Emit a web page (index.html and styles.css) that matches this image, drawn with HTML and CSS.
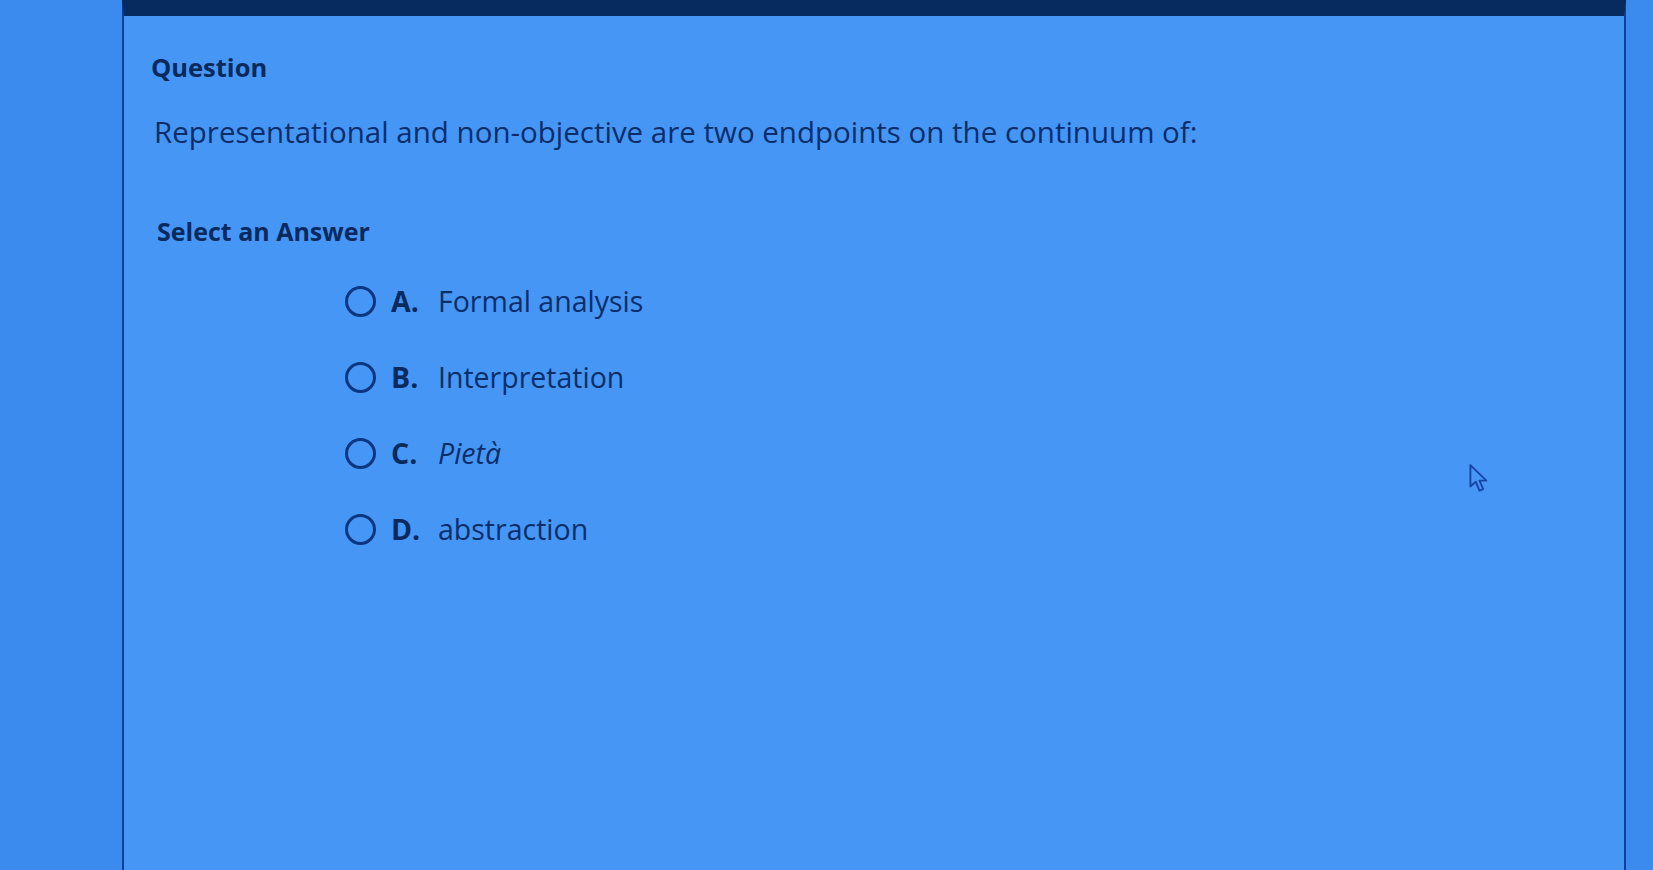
FILE: index.html
```html
<!DOCTYPE html>
<html lang="en">
<head>
<meta charset="utf-8">
<title>Question</title>
<link rel="stylesheet" href="styles.css">
</head>
<body>
<div class="screen">
  <div class="panel">
    <div class="content">
      <h2 class="label">Question</h2>
      <p class="prompt">Representational and non-objective are two endpoints on the continuum of:</p>
      <h3 class="select">Select an Answer</h3>
      <ul class="options">
        <li class="option"><span class="radio"></span><span class="letter">A.</span><span class="text">Formal analysis</span></li>
        <li class="option"><span class="radio"></span><span class="letter">B.</span><span class="text">Interpretation</span></li>
        <li class="option"><span class="radio"></span><span class="letter">C.</span><span class="text italic">Pietà</span></li>
        <li class="option"><span class="radio"></span><span class="letter">D.</span><span class="text">abstraction</span></li>
      </ul>
    </div>
    <svg class="cursor" width="24" height="32" viewBox="0 0 22 30" aria-hidden="true">
      <path d="M2 2 L2 22 L7 17.5 L10.5 26 L14 24.5 L10.5 16.5 L17 16.5 Z" fill="none" stroke="#1746a8" stroke-width="1.8" stroke-linejoin="round"/>
    </svg>
  </div>
</div>
</body>
</html>
```
FILE: styles.css
```css
html, body {
  margin: 0;
  padding: 0;
  height: 100%;
  overflow: hidden;
}
body {
  background: #3b8bee;
  font-family: "Open Sans", "Noto Sans", sans-serif;
  color: #0b2d66;
}
.screen {
  height: 870px;
  padding-left: 122px;
}
.panel {
  position: relative;
  width: 1500px;
  height: 854px;
  background: #4696f6;
  border-top: 16px solid #072b5e;
  border-left: 2px solid #0e3f9c;
  border-right: 2px solid #0e3f9c;
}
.content {
  padding: 33px 0 0 27px;
}
.label {
  margin: 0;
  font-size: 25.5px;
  font-weight: 700;
  line-height: 36px;
  color: #0a2a5e;
}
.prompt {
  margin: 27px 0 0 3px;
  font-size: 29.5px;
  line-height: 40px;
  color: #0b2e6a;
}
.select {
  margin: 61px 0 0 6px;
  font-size: 25px;
  font-weight: 700;
  line-height: 36px;
  color: #0a2a5e;
}
.options {
  list-style: none;
  margin: 32px 0 0 194px;
  padding: 0;
  display: flex;
  flex-direction: column;
  gap: 36px;
}
.option {
  display: flex;
  align-items: center;
  height: 40px;
  font-size: 28.5px;
  color: #0b2e6a;
}
.radio {
  width: 25px;
  height: 25px;
  border: 3px solid #0d3680;
  border-radius: 50%;
  flex: none;
}
.letter {
  margin-left: 15px;
  width: 47px;
  font-weight: 700;
  color: #0a2a5e;
}
.italic {
  font-style: italic;
}
.cursor {
  position: absolute;
  left: 1344px;
  top: 447px;
}
```
